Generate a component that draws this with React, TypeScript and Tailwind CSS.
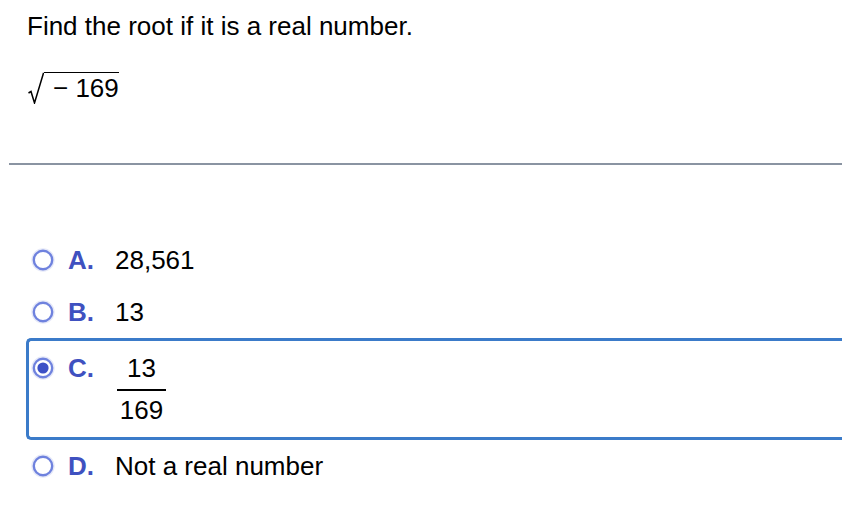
import type { ReactNode } from 'react';

function Radio({ checked = false }: { checked?: boolean }) {
  return (
    <svg width="24" height="24" viewBox="0 0 24 24" className="shrink-0">
      <circle cx="12" cy="12" r="11" fill="none" stroke="#e6e9f8" strokeWidth="1.4" />
      <circle cx="12" cy="12" r="9.2" fill="white" stroke="#6f82de" strokeWidth="2.4" />
      {checked && <circle cx="12" cy="12" r="5.6" fill="#3c50c6" />}
    </svg>
  );
}

type OptionProps = {
  letter: string;
  children: ReactNode;
  checked?: boolean;
};

function Option({ letter, children, checked }: OptionProps) {
  return (
    <div className="flex items-start">
      <div className="h-[26px] flex items-center">
        <Radio checked={checked} />
      </div>
      <span className="ml-[13px] w-[47px] font-bold text-[#3f51c0]">{letter}</span>
      <div>{children}</div>
    </div>
  );
}

export default function App() {
  return (
    <div className="w-[842px] h-[512px] bg-white text-black font-['Liberation_Sans',Arial,sans-serif] text-[26px] leading-none">
      {/* QUESTION */}
      <div className="pt-[13px] pl-[27px]">Find the root if it is a real number.</div>

      <div className="mt-[33px] ml-[28px] flex items-start">
        <svg width="16" height="32" viewBox="0 0 16 32" className="shrink-0">
          <path d="M0.5 21 L3 19.5 L6.5 31 L15.6 0.8" fill="none" stroke="black" strokeWidth="1.5" />
        </svg>
        <span className="border-t-[1.5px] border-black pl-[9px] pt-[2px]">− 169</span>
      </div>

      <div className="mt-[59px] ml-[9px] h-[2px] bg-[#8a94a2]" />

      {/* OPTIONS */}
      <div className="mt-[68px] ml-[26px]">
        <div className="h-[53px] pl-[5px] flex items-center">
          <Option letter="A.">28,561</Option>
        </div>
        <div className="h-[52px] pl-[5px] flex items-center">
          <Option letter="B.">13</Option>
        </div>
        <div className="h-[102px] border-[3px] border-r-0 border-[#3b7bc9] rounded-l-[5px] pl-[2px] pt-[14px]">
          <Option letter="C." checked>
            <div className="ml-[2px] flex flex-col items-center">
              <span className="px-[10px] pb-[8px]">13</span>
              <div className="h-[2px] w-[49px] bg-black" />
              <span className="pt-[6px]">169</span>
            </div>
          </Option>
        </div>
        <div className="h-[52px] pl-[5px] flex items-center">
          <Option letter="D.">Not a real number</Option>
        </div>
      </div>
    </div>
  );
}
